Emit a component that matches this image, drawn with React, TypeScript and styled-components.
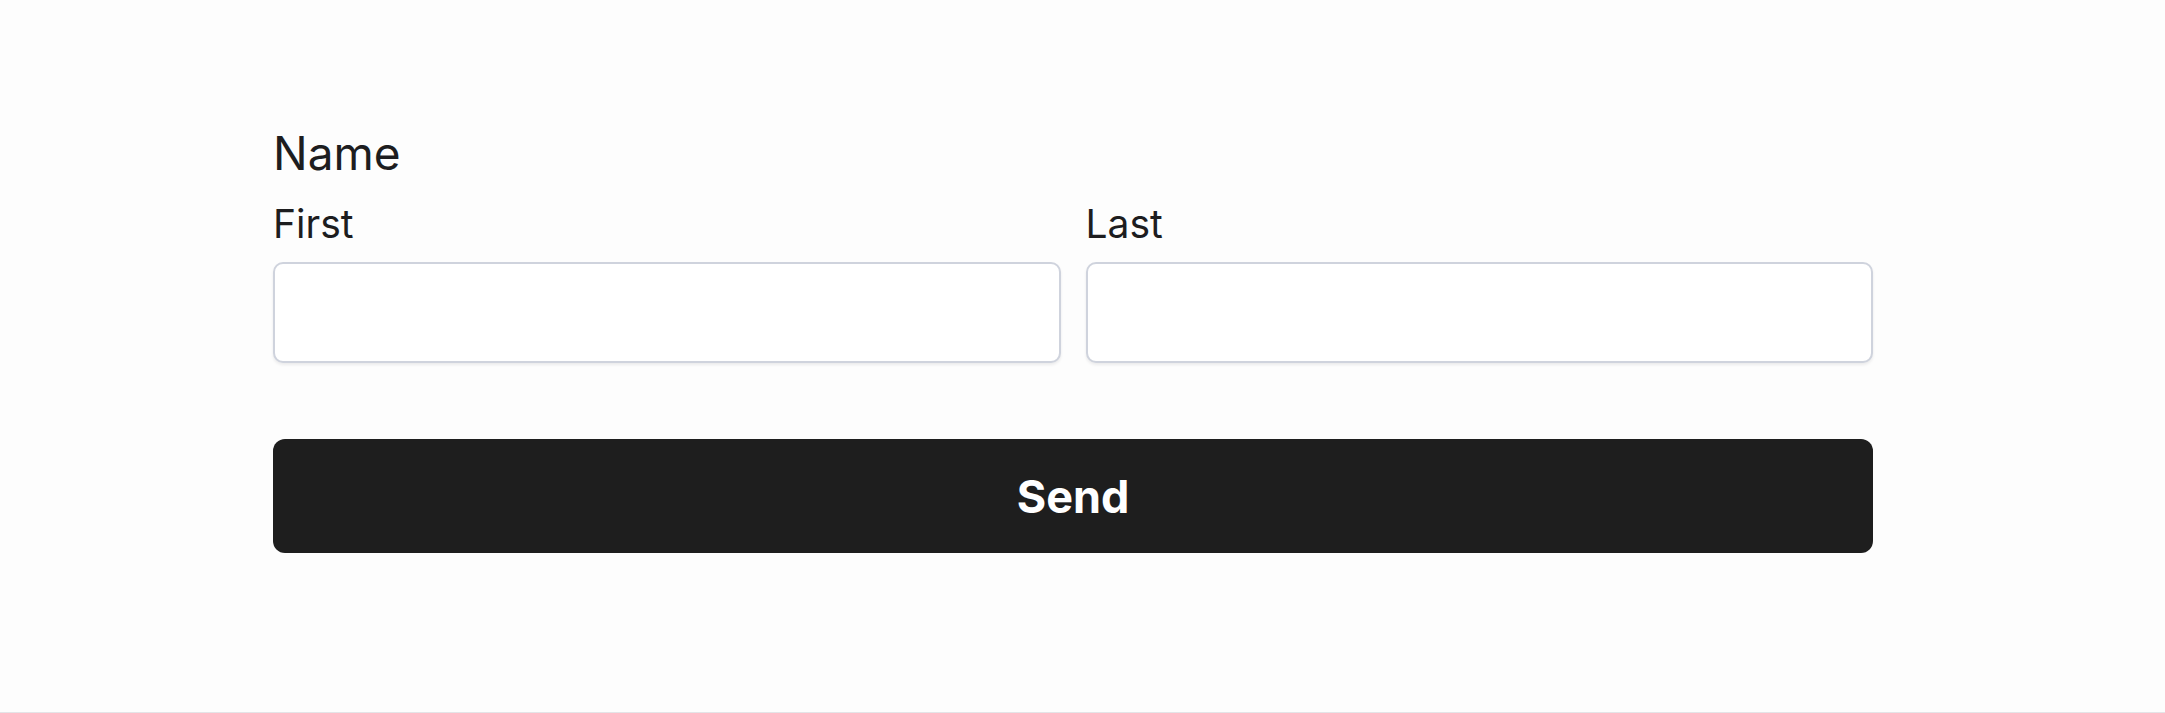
import React from "react";
import styled, { createGlobalStyle } from "styled-components";

const GlobalStyle = createGlobalStyle`
  html, body {
    margin: 0;
    padding: 0;
    background: #fdfdfd;
  }
  * {
    box-sizing: border-box;
  }
`;

const Page = styled.main`
  height: 713px;
  border-bottom: 1px solid #e4e4e7;
  padding: 125px 0 0 273px;
  font-family: Inter, "Noto Sans", sans-serif;
  color: #1d1d1f;
`;

const Form = styled.form`
  width: 1600px;
  display: flex;
  flex-direction: column;
`;

const Legend = styled.div`
  font-size: 46px;
  font-weight: 400;
  line-height: 56px;
  margin-bottom: 20px;
`;

const Row = styled.div`
  display: grid;
  grid-template-columns: 1fr 1fr;
  column-gap: 25px;
`;

const Field = styled.label`
  display: flex;
  flex-direction: column;
`;

const FieldLabel = styled.span`
  font-size: 39px;
  line-height: 46px;
  margin-bottom: 15px;
`;

const Input = styled.input`
  height: 101px;
  width: 100%;
  border: 2px solid #cfd3dd;
  border-radius: 10px;
  background: #ffffff;
  box-shadow: 0 2px 3px rgba(30, 30, 40, 0.08);
  font-family: inherit;
  font-size: 32px;
  padding: 0 20px;
  outline: none;
`;

const SubmitButton = styled.button`
  margin-top: 76px;
  height: 114px;
  width: 100%;
  border: none;
  border-radius: 12px;
  background: #1e1e1e;
  color: #ffffff;
  font-family: Inter, "Noto Sans", sans-serif;
  font-size: 45px;
  font-weight: 700;
  display: flex;
  align-items: center;
  justify-content: center;
  cursor: pointer;
`;

const App: React.FC = () => {
  return (
    <>
      <GlobalStyle />
      <Page>
        <Form onSubmit={(e) => e.preventDefault()}>
          <Legend>Name</Legend>
          <Row>
            <Field>
              <FieldLabel>First</FieldLabel>
              <Input type="text" name="first" />
            </Field>
            <Field>
              <FieldLabel>Last</FieldLabel>
              <Input type="text" name="last" />
            </Field>
          </Row>
          <SubmitButton type="submit">Send</SubmitButton>
        </Form>
      </Page>
    </>
  );
};

export default App;
